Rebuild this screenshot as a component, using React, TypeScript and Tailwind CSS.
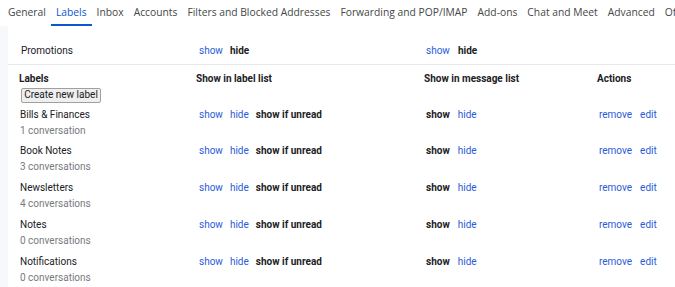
import React from "react";

const tabs = [
  "General",
  "Labels",
  "Inbox",
  "Accounts",
  "Filters and Blocked Addresses",
  "Forwarding and POP/IMAP",
  "Add-ons",
  "Chat and Meet",
  "Advanced",
  "Offline",
];

const labels = [
  { name: "Bills & Finances", count: "1 conversation" },
  { name: "Book Notes", count: "3 conversations" },
  { name: "Newsletters", count: "4 conversations" },
  { name: "Notes", count: "0 conversations" },
  { name: "Notifications", count: "0 conversations" },
];

const link = "text-[#2a5bd7] cursor-pointer";
const bold = "font-bold text-[#202124]";

function CategoryRow({ name, tall }: { name: string; tall?: boolean }) {
  return (
    <div
      className={
        "grid grid-cols-[188px_228px_173px_1fr] items-center " +
        (tall ? "h-[29px]" : "h-[27px]")
      }
    >
      <div className="pl-[13px] text-[#202124]">{name}</div>
      <div className="pl-[3px] flex gap-[7px]">
        <span className={link}>show</span>
        <span className={bold}>hide</span>
      </div>
      <div className="pl-[2px] flex gap-[8px]">
        <span className={link}>show</span>
        <span className={bold}>hide</span>
      </div>
      <div />
    </div>
  );
}

function LabelRow({ name, count }: { name: string; count: string }) {
  return (
    <div className="grid grid-cols-[188px_228px_173px_1fr] pt-[4px] pb-[0.75px]">
      <div className="pl-[12px]">
        <div className="h-[16px] leading-[16px] text-[#202124]">{name}</div>
        <div className="h-[16px] leading-[16px] text-[#777a7e]">{count}</div>
      </div>
      <div className="pl-[3px] flex gap-[7px] h-[16px] leading-[16px]">
        <span className={link}>show</span>
        <span className={link}>hide</span>
        <span className={bold}>show if unread</span>
      </div>
      <div className="pl-[2px] flex gap-[8px] h-[16px] leading-[16px]">
        <span className={bold}>show</span>
        <span className={link}>hide</span>
      </div>
      <div className="pl-[2px] flex gap-[8px] h-[16px] leading-[16px]">
        <span className={link}>remove</span>
        <span className={link}>edit</span>
      </div>
    </div>
  );
}

export default function App() {
  return (
    <div className="w-[675px] h-[287px] overflow-hidden bg-[#f6f8fc] flex flex-col">
      <div className="h-[26px] bg-white flex pl-[3px] shrink-0 whitespace-nowrap font-['Open_Sans',sans-serif] text-[10.3px] relative z-10">
        {tabs.map((t) => (
          <div
            key={t}
            className={
              "h-[26px] px-[5px] pt-[1px] flex items-center border-b-2 shrink-0 " +
              (t === "Labels"
                ? "border-[#0b57d0] text-[#0b57d0]"
                : "border-transparent text-[#444746]")
            }
          >
            {t}
          </div>
        ))}
      </div>
      <div className="ml-[8px] flex-1 bg-white overflow-hidden font-['Roboto',sans-serif] text-[10px]">
        <div className="-mt-[18.5px]">
          <CategoryRow name="Forums" tall />
          <CategoryRow name="Promotions" />
          <div className="border-t border-[#e8eaed]" />
          <div className="pt-[6px]">
            <div className="grid grid-cols-[188px_228px_173px_1fr] h-[16px] leading-[16px] font-bold text-[#202124]">
              <div className="pl-[11px]">Labels</div>
              <div>Show in label list</div>
              <div>Show in message list</div>
              <div>Actions</div>
            </div>
            <div className="pl-[13px] mt-[1px]">
              <button className="h-[15px] w-[80px] flex items-center justify-center border border-[#a0a0a0] rounded-[2px] bg-[#efefef] text-[#202124] text-[10px] leading-none">
                Create new label
              </button>
            </div>
            {labels.map((l) => (
              <LabelRow key={l.name} name={l.name} count={l.count} />
            ))}
          </div>
        </div>
      </div>
    </div>
  );
}
